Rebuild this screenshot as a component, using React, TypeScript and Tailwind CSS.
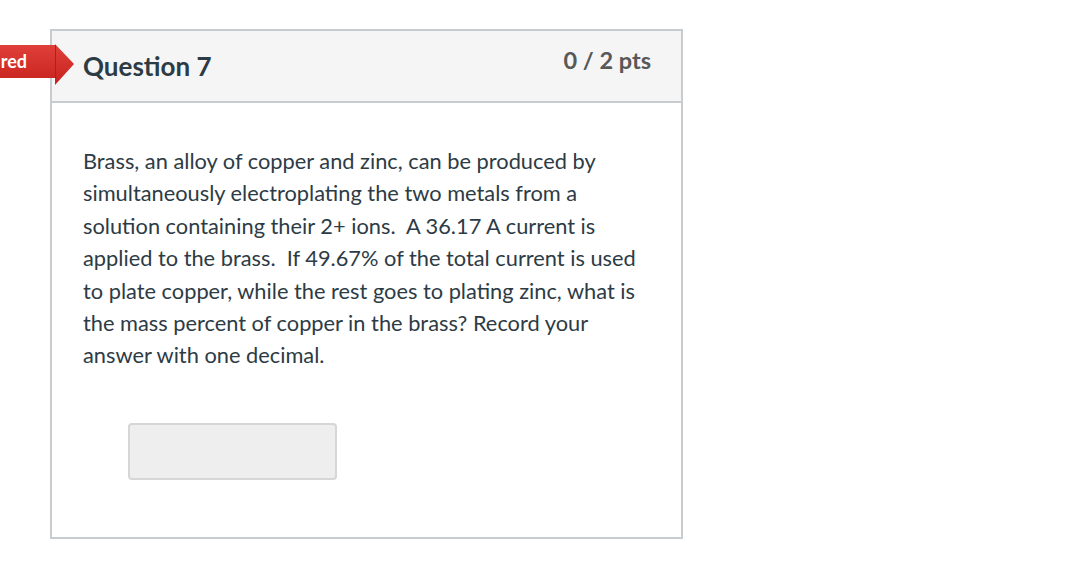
import React from "react";

export default function App() {
  return (
    <div className="relative w-[1080px] h-[571px] bg-white overflow-hidden" style={{ fontFamily: "Lato, 'Open Sans', sans-serif" }}>
      <div className="absolute left-[50px] top-[29px] w-[633px] h-[510px] border-2 border-[#c8ccce] flex flex-col">
        <div className="h-[72px] bg-[#f5f5f5] border-b-2 border-[#c8ccce] flex justify-between pl-[31px] pr-[30px]">
          <div className="pt-[17px] text-[26px] font-bold text-[#2d3b45] leading-[36px]">Question 7</div>
          <div className="pt-[14px] text-[23.5px] font-bold text-[#585858] leading-[30px]">0 / 2 pts</div>
        </div>
        <div className="pl-[31px] pr-[30px] pt-[42px]">
          <p className="text-[21.8px] leading-[32.4px] text-[#2d3b45] whitespace-pre-wrap">
            {"Brass, an alloy of copper and zinc, can be produced by simultaneously electroplating the two metals from a solution containing their 2+ ions.  A 36.17 A current is applied to the brass.  If 49.67% of the total current is used to plate copper, while the rest goes to plating zinc, what is the mass percent of copper in the brass? Record your answer with one decimal."}
          </p>
          <div className="mt-[51px] ml-[45px] w-[209px] h-[57px] bg-[#eeeeee] border-2 border-[#d6d6d6] rounded-[4px]" />
        </div>
      </div>
      <svg className="absolute left-0 top-[42px]" width="80" height="46" viewBox="0 0 80 46">
        <defs>
          <linearGradient id="rg" x1="0" y1="0" x2="0" y2="1">
            <stop offset="0" stopColor="#e0403a" />
            <stop offset="1" stopColor="#c7221d" />
          </linearGradient>
        </defs>
        <polygon points="0,3 55,3 55,2 74,22 55,43 55,36 0,36" fill="url(#rg)" />
        <line x1="55.5" y1="3" x2="55.5" y2="36" stroke="#b51d18" strokeWidth="1" />
      </svg>
      <div className="absolute left-0 top-[50px] text-[18px] font-bold text-white leading-[22px] w-[27px] overflow-hidden flex justify-end">
        <span>red</span>
      </div>
    </div>
  );
}
